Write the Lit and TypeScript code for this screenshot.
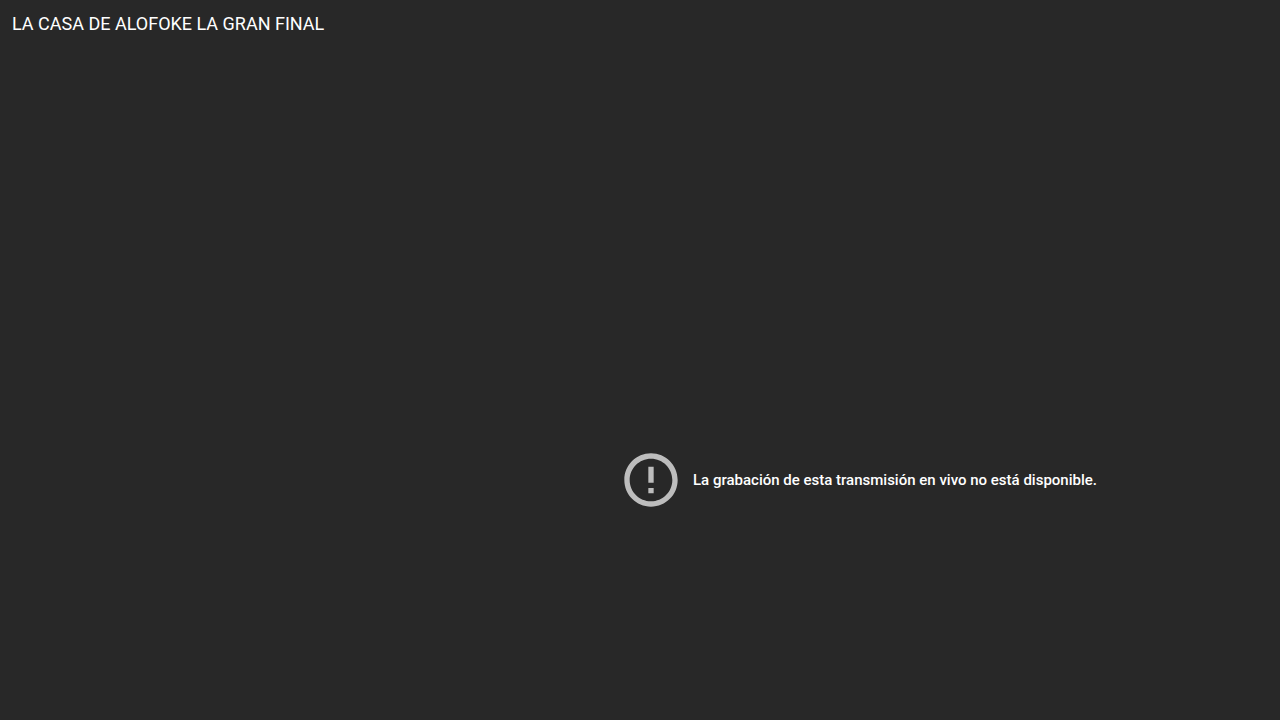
import { LitElement, html, css } from "lit";
import { customElement } from "lit/decorators.js";

@customElement("app-root")
export class AppRoot extends LitElement {
  static styles = css`
    :host {
      display: flex;
      flex-direction: column;
      box-sizing: border-box;
      min-height: 100vh;
      background: #282828;
      color: #fff;
      font-family: Roboto, Arial, sans-serif;
    }
    .title {
      margin: 0;
      padding: 12px;
      font-size: 18px;
      line-height: 24px;
      font-weight: 400;
      color: #fff;
    }
    .stage {
      flex: 1;
      display: grid;
      grid-template-columns: 1fr 1fr;
      grid-template-rows: 1fr 1fr;
    }
    .error {
      grid-area: 2 / 2;
      display: flex;
      align-items: center;
      align-self: start;
      gap: 10px;
      margin-top: 64px;
    }
    .icon {
      flex: none;
      width: 64px;
      height: 64px;
      margin-left: -21px;
    }
    .reason {
      margin: 0;
      font-size: 15px;
      line-height: 20px;
      font-weight: 500;
    }
  `;

  render() {
    return html`
      <h1 class="title">LA CASA DE ALOFOKE LA GRAN FINAL</h1>
      <main class="stage">
        <div class="error" role="alert">
          <svg class="icon" viewBox="0 0 24 24" fill="#bdbdbd" aria-hidden="true">
            <path d="M11 15h2v2h-2v-2zm0-8h2v6h-2V7zm.99-5C6.47 2 2 6.48 2 12s4.47 10 9.99 10C17.52 22 22 17.52 22 12S17.52 2 11.99 2zM12 20c-4.42 0-8-3.58-8-8s3.58-8 8-8 8 3.58 8 8-3.58 8-8 8z" />
          </svg>
          <p class="reason">La grabación de esta transmisión en vivo no está disponible.</p>
        </div>
      </main>
    `;
  }
}
